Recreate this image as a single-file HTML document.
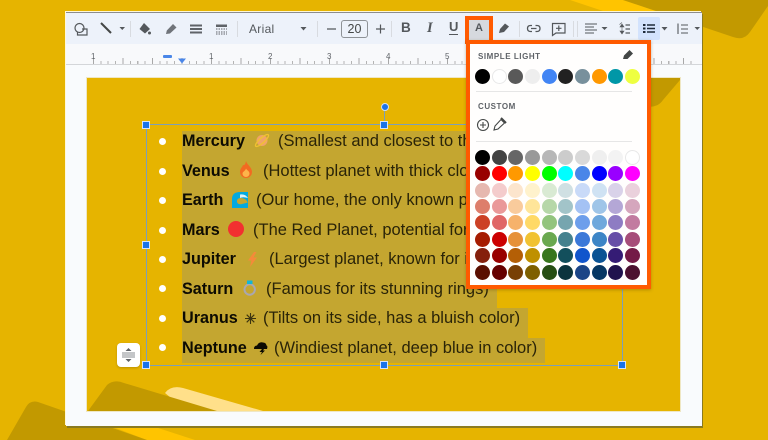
<!DOCTYPE html>
<html><head><meta charset="utf-8"><style>
html,body{margin:0;padding:0}
body{width:768px;height:440px;position:relative;overflow:hidden;background:#e6b400;font-family:"Liberation Sans",sans-serif}
.a{position:absolute}
#win{left:66px;top:12px;width:636px;height:414px;background:#f9fbfd;box-shadow:1px 2px 0 #8a7a20,-1px -1px 0 #fff8d8;overflow:hidden}
#win:before{content:"";position:absolute;left:0;top:0;right:0;height:1px;background:#8c8c8c}
.sep{position:absolute;top:21px;width:1px;height:16px;background:#d8dbe0}
.l{position:absolute;left:182px;height:29.5px;line-height:20px;font-size:16.5px;color:#2a2408;background:#c4a630;white-space:nowrap}
.l b{color:#0d0b02;font-size:16.2px}
.t{position:absolute;top:0}
.bu{position:absolute;left:158.5px;width:7px;height:7px;border-radius:50%;background:#fff}
.h{position:absolute;width:6px;height:6px;background:#1a73e8;border:1px solid #d6e4f8;margin:-4px 0 0 -4px}
.sw{position:absolute;display:grid;grid-template-columns:repeat(10,15px);column-gap:1.63px;row-gap:1.43px}
.sw i{display:block;width:15px;height:15px;border-radius:50%}
.lab{position:absolute;font-size:8px;font-weight:bold;letter-spacing:.55px;color:#5f6368}
</style></head><body>
<svg class="a" style="left:0;top:0" width="768" height="440">
<path d="M570 0H623L660 12H606Z" fill="#ffc400"/>
<path d="M623 0H768V6L750 32Q744 41 733 37Z" fill="#c29900"/>
<path d="M113 427H155L195 440H147Z" fill="#ffc400"/>
<path d="M7 440L26 407Q30 400 38 402L147 440Z" fill="#c29900"/>
</svg>
<div class="a" id="win"></div>

<!-- toolbar -->
<div class="a" style="left:66px;top:13px;width:636px;height:31px;background:#edf2fa"></div>
<div class="a" style="left:66px;top:44px;width:636px;height:20px;background:#f8f9fb;border-bottom:1px solid #d4d6d9"></div>

<!-- ruler -->
<div class="a" style="left:93px;top:61px;width:600px;height:3px;background:repeating-linear-gradient(90deg,#b4b4b4 0 1px,transparent 1px 7.375px)"></div>
<div class="a" style="left:93px;top:58px;width:600px;height:6px;background:repeating-linear-gradient(90deg,#a8a8a8 0 1px,transparent 1px 29.5px)"></div>
<div class="a" style="left:66px;top:51px;width:636px;height:12px;font-size:8px;color:#5f6368;line-height:12px">
<span class="a" style="left:25px">1</span><span class="a" style="left:143px">1</span><span class="a" style="left:202px">2</span><span class="a" style="left:261px">3</span><span class="a" style="left:320px">4</span><span class="a" style="left:379px">5</span></div>
<div class="a" style="left:163px;top:54.5px;width:9px;height:3.5px;background:#4a86e8;border-radius:1px"></div>
<svg class="a" style="left:177px;top:58px" width="10" height="6"><path d="M1 .5H9L5 5.5Z" fill="#4a86e8"/></svg>

<!-- slide -->
<div class="a" style="left:87px;top:78px;width:593px;height:333px;background:#e6b400;overflow:hidden;box-shadow:0 0 0 1px #efe7c4">
<svg class="a" style="left:0;top:0" width="593" height="333">
<path d="M78 315Q84 307 96 310L176 333H100Z" fill="#ffe08a"/>
<path d="M1 333L20 307Q27 301 37 305L130 333Z" fill="#c29900"/>
<path d="M593 2L576 22Q570 31 556 28L540 0H593Z" fill="#c29900"/>
</svg>
</div>

<!-- text lines -->
<div class="l" style="top:131px;width:300px"><b>Mercury</b><span class="t" style="left:96px">(Smallest and closest to the Sun)</span></div>
<div class="l" style="top:160.5px;width:300px"><b>Venus</b><span class="t" style="left:81px">(Hottest planet with thick clouds)</span></div>
<div class="l" style="top:190px;width:300px"><b>Earth</b><span class="t" style="left:74px">(Our home, the only known planet)</span></div>
<div class="l" style="top:219.5px;width:300px"><b>Mars</b><span class="t" style="left:71px">(The Red Planet, potential for life)</span></div>
<div class="l" style="top:249px;width:300px"><b>Jupiter</b><span class="t" style="left:87px">(Largest planet, known for its storms)</span></div>
<div class="l" style="top:278.5px;width:315px"><b>Saturn</b><span class="t" style="left:84px">(Famous for its stunning rings)</span></div>
<div class="l" style="top:308px;width:346px"><b>Uranus</b><span class="t" style="left:81px">(Tilts on its side, has a bluish color)</span></div>
<div class="l" style="top:337.5px;width:363px;height:25.5px"><b>Neptune</b><span class="t" style="left:92px">(Windiest planet, deep blue in color)</span></div>

<!-- bullets -->
<div class="bu" style="top:138px"></div><div class="bu" style="top:167.5px"></div><div class="bu" style="top:197px"></div><div class="bu" style="top:226.5px"></div><div class="bu" style="top:256px"></div><div class="bu" style="top:285px"></div><div class="bu" style="top:314.5px"></div><div class="bu" style="top:344px"></div>

<!-- emoji icons -->
<svg class="a" style="left:0;top:0" width="768" height="440">
<circle cx="262" cy="140.500" r="5.500" fill="#f0a468"/><ellipse cx="262" cy="140.500" rx="8.500" ry="2.500" transform="rotate(-42 262 140.500)" fill="none" stroke="#f2c230" stroke-width="1.300"/>
<path d="M246 161C247 165 252 167 252 172A6 6 0 0 1 240 172C240 168.500 242.500 167 243 165C244.500 165.500 245.500 164 246 161Z" fill="#f26b21"/><path d="M246 168.500C246.500 170 249.500 171 249.500 173.500A3.500 3.500 0 0 1 242.500 173.500C242.500 171.500 245.500 171 246 168.500Z" fill="#fdb44a"/>
<path d="M232 208V199Q232 192 240 192H248V203Q246 198 241 198Q236.500 198 237 202Q238 205 242 204L248 202.500V208Z" fill="#03a9e0"/><path d="M240 194.500Q245 193.500 248 198Q243 196.500 240 198Z" fill="#dff3fb"/>
<circle cx="236" cy="229" r="8" fill="#f23030"/>
<path d="M254 252L248 260.500H251.500L250 267L257 257.500H253.500L256.500 252Z" fill="#f58a3a"/>
<circle cx="249.700" cy="289.500" r="5.200" fill="none" stroke="#a9a7b0" stroke-width="2"/><rect x="247" y="280.500" width="5.500" height="3.500" fill="#11b5d8"/>
<g stroke="#3c3410" stroke-width="1.100" fill="none"><path d="M250.500 313V324M245 318.500H256M246.700 314.700L254.300 322.300M254.300 314.700L246.700 322.300"/></g>
<path d="M254 349Q254 345.500 257 345.500Q259 341.500 263 342.500Q266 342.500 266.500 345.500Q268 346 267 349Z" fill="#0d0b02"/><path d="M262 349L259.500 352H262L260.500 355L265 350.500H263L264 349Z" fill="#0d0b02"/>
</svg>

<!-- selection -->
<div class="a" style="left:146px;top:124px;width:475px;height:240px;border:1.500px solid #7c9fb8"></div>
<div class="a" style="left:383.500px;top:106px;width:1.500px;height:18px;background:#7c9fb8"></div>
<div class="a" style="left:381px;top:103px;width:6px;height:6px;background:#1a73e8;border:.5px solid #cfe0f5;border-radius:50%"></div>
<div class="h" style="left:146px;top:125px"></div><div class="h" style="left:384px;top:125px"></div>
<div class="h" style="left:146px;top:245px"></div><div class="h" style="left:622px;top:245px"></div>
<div class="h" style="left:146px;top:365px"></div><div class="h" style="left:384px;top:365px"></div><div class="h" style="left:622px;top:365px"></div>
<div class="a" style="left:117px;top:343px;width:23px;height:24px;border-radius:4px;background:#fff;box-shadow:0 1px 2px rgba(90,70,0,.3)"></div>
<svg class="a" style="left:117px;top:343px" width="23" height="24"><path d="M8.500 8H14.500L11.500 5ZM8.500 16H14.500L11.500 19Z" fill="#5f6368"/><path d="M5 10H18M5 12H18M5 14H18" stroke="#8a8d90" stroke-width="1" fill="none"/></svg>

<!-- toolbar icons -->
<div class="a" style="left:638px;top:17px;width:22px;height:23px;background:#d3e3fd;border-radius:2px"></div>
<svg class="a" style="left:0;top:0" width="768" height="44">
<g fill="none" stroke="#54585c" stroke-width="1.200">
<circle cx="79.500" cy="28" r="4.500"/><path d="M82 29H87V35H77.500V32"/>
<path d="M101 23L111 33" stroke-width="2" stroke="#444746"/>
</g>
<path d="M119.500 27H125L122.250 30Z M300.500 27H306.500L303.500 30.500Z M601.500 27H607.500L604.500 30Z M661.500 27H667.500L664.500 30.500Z M694.500 27H700L697.250 30Z" fill="#54585c"/>
<path d="M144 23L150 29L145 33.500L139.500 29Z" fill="#54585c"/><circle cx="149.500" cy="33" r="1.500" fill="#54585c"/>
<path d="M166 34L166.800 30.500L173 24L176.500 27.500L170 33.500Z" fill="#70747a"/>
<path d="M190 24.500H202V26.500H190ZM190 28H202V30H190ZM190 31.500H202V33.500H190Z" fill="#5f6368"/>
<path d="M216 24.500H227V27H216Z" fill="#5f6368"/><path d="M216 29H227M216 32H227M216 34H227" stroke="#5f6368" stroke-width="1" stroke-dasharray="1.500 1" fill="none"/>
<path d="M327 29H336M376 29H385M380.500 24.500V33.500" stroke="#54585c" stroke-width="1.200" fill="none"/>
<path d="M499 33L500 29L505 23.500L509 26.500L504 32Z" fill="#54585c"/>
<path d="M532 25.500H530.500Q527.500 25.500 527.500 28.500Q527.500 31.500 530.500 31.500H532M535.500 25.500H537Q540 25.500 540 28.500Q540 31.500 537 31.500H535.500M531 28.500H536.500" stroke="#54585c" stroke-width="1.300" fill="none"/>
<path d="M552.500 23.500H565V33H556L552.500 35.500ZM558.800 25.500V31M556 28.300H561.500" stroke="#54585c" stroke-width="1.200" fill="none"/>
<path d="M585 24H597M585 27H594M585 30H597M585 33H594" stroke="#54585c" stroke-width="1.100" fill="none"/>
<path d="M619.500 24.500L622 22.500L619.500 24.500ZM620 27H624L622 24ZM620 31H624L622 34ZM622 26V32" fill="#54585c" stroke="#54585c" stroke-width=".6"/>
<path d="M625.500 25H630M625.500 29H630M625.500 33H630" stroke="#54585c" stroke-width="1.200" fill="none"/>
<path d="M647 25H655M647 28.500H655M647 32H655" stroke="#1d2a3a" stroke-width="1.400"/><path d="M643 24H645.500V26H643ZM643 27.500H645.500V29.500H643ZM643 31H645.500V33H643Z" fill="#1d2a3a"/>
<path d="M678 23.500V34M688 25H681M688 29H681M688 33H681" stroke="#54585c" stroke-width="1.100" fill="none"/>
</svg>
<div class="sep" style="left:130px"></div><div class="sep" style="left:237px"></div><div class="sep" style="left:317px"></div><div class="sep" style="left:391px"></div><div class="sep" style="left:519px"></div><div class="sep" style="left:573px"></div><div class="sep" style="left:577px"></div>
<div class="a" style="left:249px;top:21px;font-size:12px;line-height:16px;color:#54585c;letter-spacing:.3px">Arial</div>
<div class="a" style="left:341px;top:20px;width:25px;height:16px;border:1px solid #8e9296;border-radius:3px;font-size:12.500px;line-height:16px;text-align:center;color:#444746">20</div>
<div class="a" style="left:401px;top:20px;font-size:13.500px;font-weight:bold;line-height:16px;color:#54585c">B</div>
<div class="a" style="left:427px;top:20px;font-family:'Liberation Serif',serif;font-size:14.500px;font-weight:bold;font-style:italic;line-height:16px;color:#54585c">I</div>
<div class="a" style="left:449px;top:20px;font-size:13px;font-weight:bold;line-height:14px;color:#54585c;height:14px;border-bottom:1px solid #54585c">U</div>

<!-- A button + popup -->
<div class="a" style="left:465px;top:16px;width:20px;height:24px;border:4px solid #ff5a00;border-bottom:0;background:#d6d9de;font-size:11px;font-weight:bold;text-align:center;line-height:17px;color:#54585c">A</div>
<div class="a" style="left:465.500px;top:40px;width:177px;height:241px;border:4px solid #ff5a00;background:#fffefd;box-shadow:0 1px 3px rgba(90,70,0,.35)"></div>
<div class="lab" style="left:478px;top:52px">SIMPLE LIGHT</div>
<div class="lab" style="left:478px;top:102px">CUSTOM</div>
<svg class="a" style="left:470px;top:44px" width="175" height="105">
<path d="M153 15L154 11.500L159.500 6L163 9.500L157.500 15Z" fill="#444746"/>
<path d="M6 47.500H162M6 97.500H162" stroke="#e6e6e6" stroke-width="1"/>
<circle cx="13" cy="81" r="5.500" fill="none" stroke="#444746" stroke-width="1.100"/><path d="M13 78V84M10 81H16" stroke="#444746" stroke-width="1.100"/>
<path d="M24 86L25 82L31 75.500L34.500 79L28 85Z" fill="none" stroke="#444746" stroke-width="1.100"/><path d="M31 74L36 79" stroke="#444746" stroke-width="2"/>
</svg>
<div class="sw" style="left:475.200px;top:68.500px">
<i style="background:#000"></i><i style="background:#fff;box-shadow:inset 0 0 0 1px #e8e8e8"></i><i style="background:#595959"></i><i style="background:#eee"></i><i style="background:#4285f4"></i><i style="background:#212121"></i><i style="background:#78909c"></i><i style="background:#ff9800"></i><i style="background:#0097a7"></i><i style="background:#eeff41"></i>
</div>
<div class="sw" style="left:475.200px;top:149.800px">
<i style="background:#000"></i><i style="background:#434343"></i><i style="background:#666"></i><i style="background:#999"></i><i style="background:#b7b7b7"></i><i style="background:#ccc"></i><i style="background:#d9d9d9"></i><i style="background:#efefef"></i><i style="background:#f3f3f3"></i><i style="background:#fff;box-shadow:inset 0 0 0 1px #e8e8e8"></i>
<i style="background:#980000"></i><i style="background:#f00"></i><i style="background:#f90"></i><i style="background:#ff0"></i><i style="background:#0f0"></i><i style="background:#0ff"></i><i style="background:#4a86e8"></i><i style="background:#00f"></i><i style="background:#90f"></i><i style="background:#f0f"></i>
<i style="background:#e6b8af"></i><i style="background:#f4cccc"></i><i style="background:#fce5cd"></i><i style="background:#fff2cc"></i><i style="background:#d9ead3"></i><i style="background:#d0e0e3"></i><i style="background:#c9daf8"></i><i style="background:#cfe2f3"></i><i style="background:#d9d2e9"></i><i style="background:#ead1dc"></i>
<i style="background:#dd7e6b"></i><i style="background:#ea9999"></i><i style="background:#f9cb9c"></i><i style="background:#ffe599"></i><i style="background:#b6d7a8"></i><i style="background:#a2c4c9"></i><i style="background:#a4c2f4"></i><i style="background:#9fc5e8"></i><i style="background:#b4a7d6"></i><i style="background:#d5a6bd"></i>
<i style="background:#cc4125"></i><i style="background:#e06666"></i><i style="background:#f6b26b"></i><i style="background:#ffd966"></i><i style="background:#93c47d"></i><i style="background:#76a5af"></i><i style="background:#6d9eeb"></i><i style="background:#6fa8dc"></i><i style="background:#8e7cc3"></i><i style="background:#c27ba0"></i>
<i style="background:#a61c00"></i><i style="background:#c00"></i><i style="background:#e69138"></i><i style="background:#f1c232"></i><i style="background:#6aa84f"></i><i style="background:#45818e"></i><i style="background:#3c78d8"></i><i style="background:#3d85c6"></i><i style="background:#674ea7"></i><i style="background:#a64d79"></i>
<i style="background:#85200c"></i><i style="background:#900"></i><i style="background:#b45f06"></i><i style="background:#bf9000"></i><i style="background:#38761d"></i><i style="background:#134f5c"></i><i style="background:#1155cc"></i><i style="background:#0b5394"></i><i style="background:#351c75"></i><i style="background:#741b47"></i>
<i style="background:#5b0f00"></i><i style="background:#660000"></i><i style="background:#783f04"></i><i style="background:#7f6000"></i><i style="background:#274e13"></i><i style="background:#0c343d"></i><i style="background:#1c4587"></i><i style="background:#073763"></i><i style="background:#20124d"></i><i style="background:#4c1130"></i>
</div>
</body></html>
